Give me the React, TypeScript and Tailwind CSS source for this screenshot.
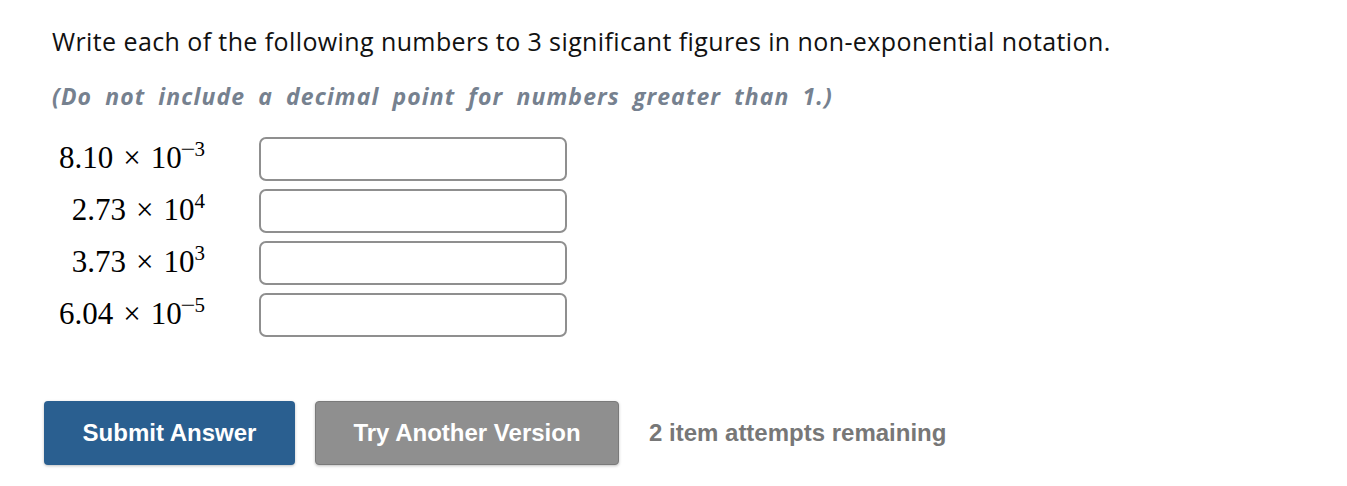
import { useState } from 'react'

const rows = [
  { base: '8.10', minus: true, exp: '3' },
  { base: '2.73', minus: false, exp: '4' },
  { base: '3.73', minus: false, exp: '3' },
  { base: '6.04', minus: true, exp: '5' },
]

export default function App() {
  const [values, setValues] = useState(['', '', '', ''])
  return (
    <div className="min-h-[486px] w-[1347px] bg-white pl-[52px] pt-[22px]">
      <p className="font-['Open_Sans',sans-serif] text-[25px] leading-[38px] tracking-[0.4px] text-[#111]">
        Write each of the following numbers to 3 significant figures in non-exponential notation.
      </p>
      <p className="mt-[18px] font-['Open_Sans',sans-serif] text-[23px] font-bold italic leading-[36px] tracking-[1.1px] text-[#76818f] [word-spacing:6px]">
        (Do not include a decimal point for numbers greater than 1.)
      </p>
      <div className="mt-[23px] flex flex-col gap-2">
        {rows.map((row, i) => (
          <div key={i} className="flex items-center">
            <div className="flex w-[153px] items-baseline justify-end pb-[4px] font-['Liberation_Serif',serif] text-[31px] leading-none text-black">
              <span>{row.base}</span>
              <span className="mx-[10px]">×</span>
              <span>10</span>
              <span className="relative top-[-12px] text-[21px]">
                {row.minus ? <span className="mr-[1px] scale-x-125 inline-block">−</span> : null}
                {row.exp}
              </span>
            </div>
            <input
              value={values[i]}
              onChange={(e) => setValues(values.map((v, j) => (j === i ? e.target.value : v)))}
              className="ml-[54px] h-[44px] w-[308px] rounded-[7px] border-2 border-[#8f8f8f] bg-white px-2 text-[20px] outline-none"
            />
          </div>
        ))}
      </div>
      <div className="mt-[64px] -ml-[8px] flex items-center font-['Liberation_Sans',Arial,sans-serif] text-[24px] font-bold">
        <button className="h-[64px] w-[251px] rounded-[4px] bg-[#2a5f90] text-white shadow-[0_1px_3px_rgba(0,0,0,0.25)]">
          Submit Answer
        </button>
        <button className="ml-[20px] h-[64px] w-[304px] rounded-[4px] border border-[#7a7a7a] bg-[#8f8f8f] text-white shadow-[0_1px_3px_rgba(0,0,0,0.25)]">
          Try Another Version
        </button>
        <span className="ml-[30px] text-[#777]">2 item attempts remaining</span>
      </div>
    </div>
  )
}
